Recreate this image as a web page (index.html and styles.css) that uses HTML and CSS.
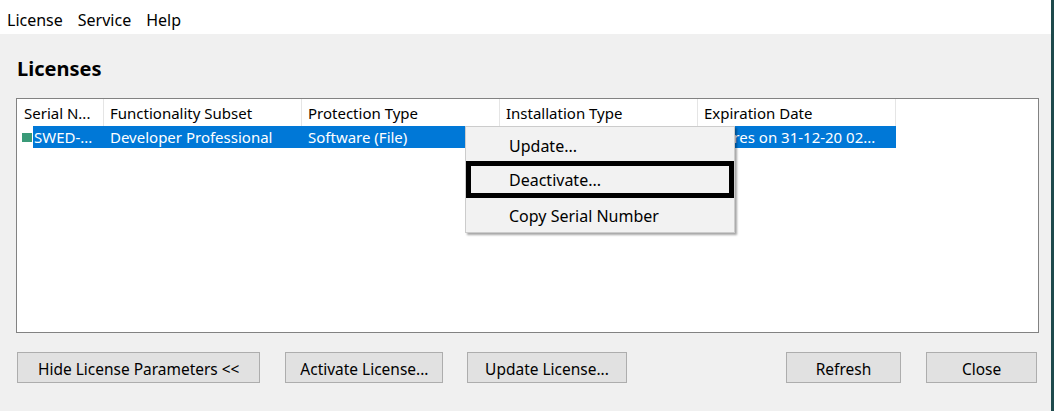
FILE: index.html
```html
<!DOCTYPE html>
<html>
<head>
<meta charset="utf-8">
<link rel="stylesheet" href="styles.css">
</head>
<body>
<div class="window">
  <nav class="menubar">
    <span class="menu-item">License</span>
    <span class="menu-item">Service</span>
    <span class="menu-item">Help</span>
  </nav>
  <main class="content">
    <h1 class="title">Licenses</h1>
    <div class="table">
      <div class="thead">
        <div class="th col-serial">Serial N...</div>
        <div class="th col">Functionality Subset</div>
        <div class="th col">Protection Type</div>
        <div class="th col">Installation Type</div>
        <div class="th col">Expiration Date</div>
      </div>
      <div class="row">
        <div class="row-icon"><span class="status"></span></div>
        <div class="row-sel">
          <div class="td col-serial-sel">SWED-...</div>
          <div class="td col">Developer Professional</div>
          <div class="td col">Software (File)</div>
          <div class="td col"></div>
          <div class="td col">Expires on 31-12-20 02...</div>
        </div>
      </div>
    </div>
    <div class="buttons">
      <button class="btn btn-hide"><span class="btn-label">Hide License Parameters &lt;&lt;</span></button>
      <button class="btn btn-activate"><span class="btn-label">Activate License...</span></button>
      <button class="btn btn-update"><span class="btn-label">Update License...</span></button>
      <span class="spacer"></span>
      <button class="btn btn-refresh"><span class="btn-label">Refresh</span></button>
      <button class="btn btn-close"><span class="btn-label">Close</span></button>
    </div>
  </main>
  <div class="ctx-menu">
    <div class="ctx-item">Update...</div>
    <div class="ctx-item ctx-focus">Deactivate...</div>
    <div class="ctx-sep"></div>
    <div class="ctx-item">Copy Serial Number</div>
  </div>
</div>
</body>
</html>
```

FILE: styles.css
```css
* { box-sizing: border-box; }
html, body {
  margin: 0;
  padding: 0;
  width: 1054px;
  height: 411px;
  overflow: hidden;
  background: #f0f0f0;
}
body {
  font-family: "Noto Sans", "Open Sans", sans-serif;
  font-size: 15px;
  color: #000;
}
.window {
  position: relative;
  width: 1054px;
  height: 411px;
  background: #f0f0f0;
  border-right: 3px solid #1e4a4c;
}
.menubar {
  height: 34px;
  background: #fff;
  display: flex;
  align-items: center;
  gap: 15px;
  padding: 6px 0 0 7px;
  font-size: 16px;
}
.content {
  padding: 0 12px 0 16px;
}
.title {
  margin: 0;
  padding: 21px 0 0 1px;
  height: 64px;
  font-size: 20px;
  font-weight: bold;
  line-height: 28px;
}
.table {
  height: 235px;
  background: #fff;
  border: 1px solid #828282;
}
.thead {
  display: flex;
  height: 27px;
  align-items: stretch;
}
.th {
  display: flex;
  align-items: center;
  border-right: 1px solid #e5e5e5;
  white-space: nowrap;
  overflow: hidden;
}
.col-serial {
  width: 87px;
  padding-left: 7px;
}
.col {
  width: 198px;
  padding-left: 6px;
}
.row {
  display: flex;
  height: 22px;
}
.row-icon {
  width: 16px;
  display: flex;
  align-items: center;
  padding-left: 5px;
}
.status {
  width: 10px;
  height: 9px;
  background: #3a9a78;
}
.row-sel {
  display: flex;
  background: #0078d7;
  color: #fff;
}
.td {
  display: flex;
  align-items: center;
  white-space: nowrap;
  overflow: hidden;
}
.row-sel .col-serial-sel {
  width: 71px;
  padding-left: 1px;
}
.row-sel .col {
  width: 198px;
  padding-left: 6px;
}
.buttons {
  display: flex;
  margin-top: 19px;
  padding-left: 1px;
  padding-right: 2px;
}
.btn {
  height: 31px;
  background: #e1e1e1;
  border: 1px solid #adadad;
  border-radius: 0;
  font-family: "Noto Sans", sans-serif;
  font-size: 17px;
  color: #000;
  padding: 2px 0 0 0;
  margin: 0;
  white-space: nowrap;
  display: flex;
  align-items: center;
  justify-content: center;
  overflow: visible;
}
.btn-label {
  display: inline-block;
  transform: scaleX(0.91);
  transform-origin: center;
}
.btn-hide { width: 243px; }
.btn-activate { width: 158px; margin-left: 25px; }
.btn-update { width: 160px; margin-left: 24px; }
.spacer { flex: 1; }
.btn-refresh { width: 115px; }
.btn-close { width: 111px; margin-left: 25px; }
.ctx-menu {
  position: absolute;
  left: 465px;
  top: 126px;
  width: 270px;
  height: 107px;
  background: #f2f2f2;
  border: 1px solid #cccccc;
  box-shadow: 2px 2px 2px rgba(0, 0, 0, 0.35);
  padding-top: 3px;
}
.ctx-item {
  height: 31px;
  display: flex;
  align-items: center;
  padding-left: 43px;
  font-size: 16px;
}
.ctx-focus {
  height: 37px;
  border: 5px solid #000;
  padding-left: 38px;
}
.ctx-sep {
  height: 2px;
}
```
